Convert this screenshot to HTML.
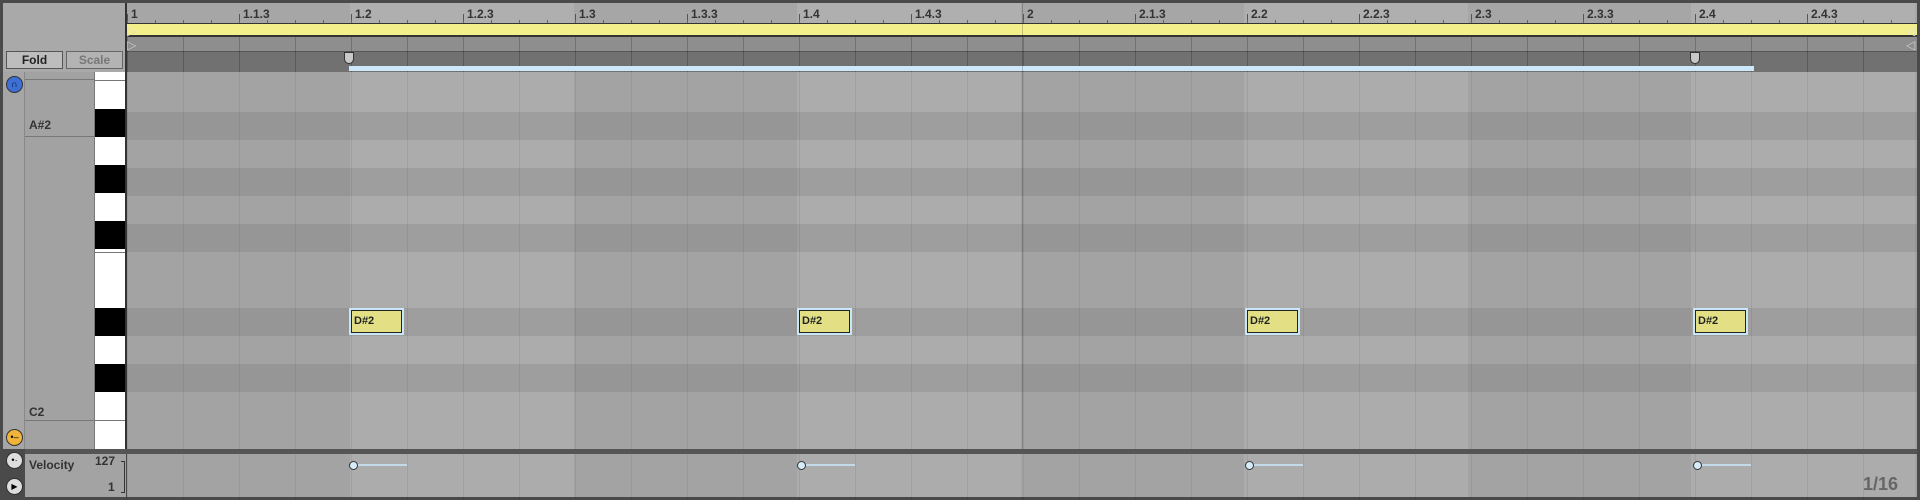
<!DOCTYPE html>
<html><head><meta charset="utf-8"><style>
*{margin:0;padding:0;box-sizing:border-box}
body{width:1920px;height:500px;overflow:hidden;background:#4a4a4a;font-family:"Liberation Sans",sans-serif;position:relative}
.a{position:absolute}
.lbl{position:absolute;top:7px;font-size:12px;color:#333;font-weight:bold}
.note{position:absolute;top:308px;width:55px;height:27px;border:2px solid #c9e6f7;background:#222;padding:1px}
.note div{background:#e2df84;width:100%;height:100%;font-size:11px;font-weight:bold;color:#222;padding:4px 0 0 2px}
.vel{position:absolute;top:461px;width:9px;height:9px;border-radius:50%;background:#d6ecf9;border:1.5px solid #333}
.vl{position:absolute;top:464px;height:2px;width:50px;background:#c3dbe8}
.ic{position:absolute;left:6px;width:17px;height:17px;border-radius:50%;border:1px solid #333;font-size:9px;text-align:center;line-height:15px}
</style></head><body>
<!-- left panel -->
<div class="a" style="left:3px;top:3px;width:123px;height:446px;background:#a9a9a9"></div>
<div class="a" style="left:3px;top:72px;width:22px;height:377px;background:#a6a6a6;border-right:1px solid #888"></div>
<div class="a" style="left:25px;top:72px;width:70px;height:377px;background:#a2a2a2"></div>
<div class="a" style="left:25px;top:79px;width:70px;height:1px;background:#777"></div>
<div class="a" style="left:25px;top:136px;width:70px;height:1px;background:#777"></div>
<div class="a" style="left:25px;top:420px;width:70px;height:1px;background:#777"></div>
<div class="a" style="left:94px;top:72px;width:1px;height:377px;background:#777"></div>
<div class="a" style="left:29px;top:118px;font-size:12px;font-weight:bold;color:#333">A#2</div>
<div class="a" style="left:29px;top:405px;font-size:12px;font-weight:bold;color:#333">C2</div>
<div class="a" style="left:6px;top:51px;width:57px;height:18px;background:#bdbdbd;border:1px solid #555;font-size:12px;font-weight:bold;text-align:center;line-height:16px;color:#222">Fold</div>
<div class="a" style="left:66px;top:51px;width:57px;height:18px;background:#b3b3b3;border:1px solid #666;font-size:12px;font-weight:bold;text-align:center;line-height:16px;color:#777">Scale</div>
<div class="ic" style="top:76px;background:#3d6fd6">∩</div>
<div class="ic" style="top:429px;background:#f0b43a">•–</div>
<div class="ic" style="top:452px;background:#ddd">•·</div>
<div class="ic" style="top:478px;background:#ddd;font-size:8px">▶</div>
<!-- piano -->
<div class="a" style="left:95px;top:72px;width:31px;height:377px;background:#fff"></div>
<div class="a" style="left:95px;top:80px;width:31px;height:1px;background:#777"></div>
<div class="a" style="left:95px;top:252px;width:31px;height:1px;background:#777"></div>
<div class="a" style="left:95px;top:420px;width:31px;height:1px;background:#777"></div>
<div class="a" style="left:95px;top:109px;width:31px;height:28px;background:#000"></div>
<div class="a" style="left:95px;top:165px;width:31px;height:28px;background:#000"></div>
<div class="a" style="left:95px;top:221px;width:31px;height:28px;background:#000"></div>
<div class="a" style="left:95px;top:308px;width:31px;height:28px;background:#000"></div>
<div class="a" style="left:95px;top:364px;width:31px;height:28px;background:#000"></div>
<div class="a" style="left:125px;top:3px;width:2px;height:446px;background:#333"></div>
<!-- ruler -->
<div class="a" style="left:127px;top:3px;width:1790px;height:21px;background:repeating-linear-gradient(to right,#a6a6a6 0 223px,#afafaf 223px 447px)"></div>
<div class="a" style="left:127px;top:14px;width:1790px;height:10px;background:repeating-linear-gradient(to right,#555 0 1px,transparent 1px 112px)"></div>
<div class="a" style="left:127px;top:20px;width:1790px;height:4px;background:repeating-linear-gradient(to right,#666 0 1px,transparent 1px 28px)"></div>
<div class="lbl" style="left:131px">1</div>
<div class="lbl" style="left:243px">1.1.3</div>
<div class="lbl" style="left:355px">1.2</div>
<div class="lbl" style="left:467px">1.2.3</div>
<div class="lbl" style="left:579px">1.3</div>
<div class="lbl" style="left:691px">1.3.3</div>
<div class="lbl" style="left:803px">1.4</div>
<div class="lbl" style="left:915px">1.4.3</div>
<div class="lbl" style="left:1027px">2</div>
<div class="lbl" style="left:1139px">2.1.3</div>
<div class="lbl" style="left:1251px">2.2</div>
<div class="lbl" style="left:1363px">2.2.3</div>
<div class="lbl" style="left:1475px">2.3</div>
<div class="lbl" style="left:1587px">2.3.3</div>
<div class="lbl" style="left:1699px">2.4</div>
<div class="lbl" style="left:1811px">2.4.3</div>
<!-- yellow bar -->
<div class="a" style="left:127px;top:23px;width:1790px;height:14px;background:#f3ef8a;border-top:1px solid #333;border-bottom:2px solid #333"></div>
<div class="a" style="left:127px;top:37px;width:1790px;height:14px;background:#8e8e8e"></div>
<div class="a" style="left:127px;top:51px;width:1790px;height:21px;background:#717171;border-top:1px solid #555"></div>
<div class="a" style="left:127px;top:37px;width:1790px;height:35px;background:repeating-linear-gradient(to right,rgba(0,0,0,.2) 0 1px,transparent 1px 56px)"></div>
<div class="a" style="left:127px;top:24px;font-size:12px;color:#ddd">▷</div>
<div class="a" style="left:127px;top:38px;font-size:12px;color:#ccc">▷</div>
<div class="a" style="left:1906px;top:24px;font-size:12px;color:#ddd">◁</div>
<div class="a" style="left:1906px;top:38px;font-size:12px;color:#ccc">◁</div>
<div class="a" style="left:349px;top:66px;width:1405px;height:5px;background:#cde8fb"></div>
<div class="a" style="left:344px;top:52px;width:10px;height:12px;background:#c8c8c8;border:1px solid #333;border-radius:0 0 5px 5px"></div>
<div class="a" style="left:1690px;top:52px;width:10px;height:12px;background:#c8c8c8;border:1px solid #333;border-radius:0 0 5px 5px"></div>
<!-- grid -->
<div class="a" style="left:127px;top:72px;width:1790px;height:377px;background:repeating-linear-gradient(to right,#a3a3a3 0 223px,#acacac 223px 447px)"></div>
<div class="a" style="left:127px;top:112px;width:1790px;height:28px;background:rgba(0,0,0,.08)"></div>
<div class="a" style="left:127px;top:168px;width:1790px;height:28px;background:rgba(0,0,0,.08)"></div>
<div class="a" style="left:127px;top:224px;width:1790px;height:28px;background:rgba(0,0,0,.08)"></div>
<div class="a" style="left:127px;top:308px;width:1790px;height:28px;background:rgba(0,0,0,.08)"></div>
<div class="a" style="left:127px;top:364px;width:1790px;height:28px;background:rgba(0,0,0,.08)"></div>
<div class="a" style="left:127px;top:72px;width:1790px;height:428px;background:repeating-linear-gradient(to right,rgba(0,0,0,.07) 0 1px,transparent 1px 56px)"></div>
<div class="a" style="left:1022px;top:3px;width:1px;height:497px;background:rgba(0,0,0,.2)"></div>
<div class="note" style="left:349px"><div>D#2</div></div>
<div class="note" style="left:797px"><div>D#2</div></div>
<div class="note" style="left:1245px"><div>D#2</div></div>
<div class="note" style="left:1693px"><div>D#2</div></div>
<!-- separator & velocity -->
<div class="a" style="left:25px;top:449px;width:1895px;height:5px;background:#555"></div>
<div class="a" style="left:25px;top:454px;width:101px;height:43px;background:#a3a3a3"></div>
<div class="a" style="left:127px;top:454px;width:1790px;height:43px;background:repeating-linear-gradient(to right,#a3a3a3 0 223px,#acacac 223px 447px)"></div>
<div class="a" style="left:127px;top:454px;width:1790px;height:43px;background:repeating-linear-gradient(to right,rgba(0,0,0,.07) 0 1px,transparent 1px 56px)"></div>
<div class="a" style="left:29px;top:458px;font-size:12px;font-weight:bold;color:#333">Velocity</div>
<div class="a" style="left:95px;top:454px;font-size:12px;font-weight:bold;color:#333">127</div>
<div class="a" style="left:108px;top:480px;font-size:12px;font-weight:bold;color:#333">1</div>
<div class="a" style="left:121px;top:461px;width:4px;height:32px;border:1px solid #333;border-left:none"></div>
<div class="vl" style="left:357px"></div><div class="vel" style="left:349px"></div>
<div class="vl" style="left:805px"></div><div class="vel" style="left:797px"></div>
<div class="vl" style="left:1253px"></div><div class="vel" style="left:1245px"></div>
<div class="vl" style="left:1701px"></div><div class="vel" style="left:1693px"></div>
<div class="a" style="left:1863px;top:474px;font-size:18px;font-weight:bold;color:#666">1/16</div>
<div class="a" style="left:1917px;top:0;width:3px;height:500px;background:#4a4a4a"></div>
</body></html>
